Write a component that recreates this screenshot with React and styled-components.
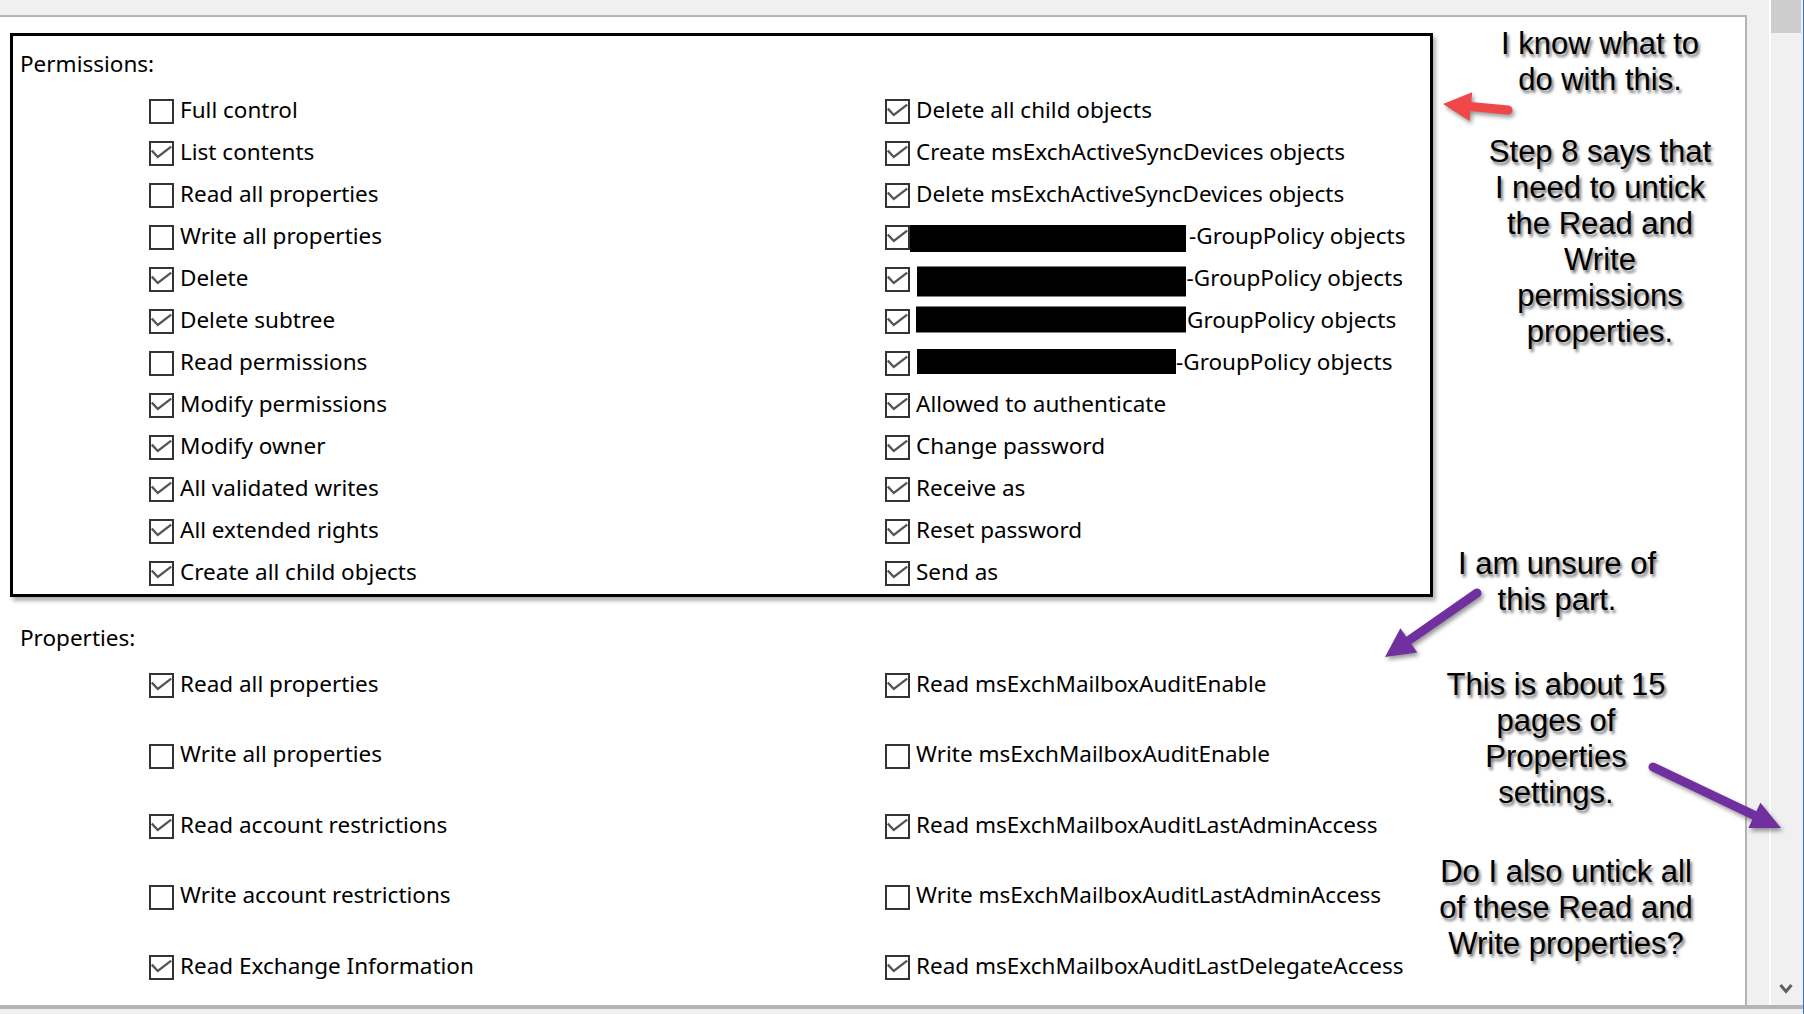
import React from "react";
import styled, { createGlobalStyle } from "styled-components";

const GlobalStyle = createGlobalStyle`
  html, body { margin: 0; padding: 0; background: #f0f0f0; }
  body {
    width: 1804px; height: 1014px; overflow: hidden;
    font-family: "Noto Sans", "Open Sans", sans-serif;
  }
  #root { width: 1804px; height: 1014px; }
`;

const Page = styled.div`
  position: relative;
  width: 1804px;
  height: 1014px;
  box-sizing: border-box;
  border-right: 1px solid #2b79d0;
  background: #f0f0f0;
  display: flex;
  flex-direction: column;
  overflow: hidden;
`;

const Body = styled.div`
  display: flex;
  height: 1005px;
`;

const BottomRule = styled.div`
  height: 4px;
  background: #b4b4b4;
`;

const MainColumn = styled.div`
  width: 1747px;
  display: flex;
  flex-direction: column;
`;

const TopStrip = styled.div`
  height: 15px;
`;

const Panel = styled.div`
  flex: 1;
  min-height: 0;
  background: #fff;
  border-top: 2px solid #b4b4b4;
  border-right: 2px solid #b4b4b4;
  padding: 16px 0 0 10px;
  overflow: hidden;
`;

const Gutter = styled.div`
  width: 22px;
  border-right: 2px solid #fff;
`;

const ScrollBar = styled.div`
  width: 30px;
  display: flex;
  flex-direction: column;
  justify-content: space-between;
  align-items: center;
`;

const Thumb = styled.div`
  width: 30px;
  height: 33px;
  background: #cdcdcd;
`;

const ChevronDown = styled.svg`
  display: block;
  margin-bottom: 11px;
`;

const FrameBox = styled.section`
  width: 1423px;
  height: 564px;
  box-sizing: border-box;
  border: 3px solid #000;
  box-shadow: 3px 4px 4px rgba(0, 0, 0, 0.3);
  padding: 13px 0 0 7px;
`;

const PlainSection = styled.section`
  margin-top: 26px;
  padding-left: 10px;
`;

const SectionLabel = styled.div`
  font-size: 22.5px;
  line-height: 30px;
  color: #000;
`;

const OptionGrid = styled.div`
  display: grid;
  grid-template-columns: 736px auto;
  row-gap: ${(p) => p.$rowGap}px;
  margin-top: 11.5px;
  padding-left: 129px;
`;

const OptionRow = styled.div`
  display: flex;
  align-items: center;
  gap: 6px;
  height: 42px;
`;

const Box = styled.span`
  flex: 0 0 25px;
  width: 25px;
  height: 25px;
  box-sizing: border-box;
  border: 2px solid #333;
  background: #fff;
  display: flex;
  align-items: center;
  justify-content: center;
`;

const OptionText = styled.span`
  display: flex;
  align-items: center;
  font-size: 22.5px;
  line-height: 30px;
  padding-bottom: 4px;
  color: #000;
  white-space: nowrap;
`;

const Redaction = styled.span`
  display: inline-block;
  flex-shrink: 0;
  width: ${(p) => p.$w}px;
  height: ${(p) => p.$h}px;
  margin-left: ${(p) => p.$ml}px;
  margin-right: ${(p) => p.$mr}px;
  transform: translateY(${(p) => p.$dy}px);
  background: #000;
`;

const Note = styled.p`
  position: absolute;
  margin: 0;
  left: ${(p) => p.$cx - 200}px;
  top: ${(p) => p.$top}px;
  width: 400px;
  text-align: center;
  font-family: "Liberation Sans", Arial, sans-serif;
  font-size: 31px;
  line-height: 36px;
  color: #000;
  text-shadow: 2px 3px 3px rgba(0, 0, 0, 0.55);
`;

const Overlay = styled.svg`
  position: absolute;
  left: 0;
  top: 0;
  pointer-events: none;
`;

const ShadowGroup = styled.g`
  filter: drop-shadow(2px 3px 2px rgba(0, 0, 0, 0.4));
`;

function Checkbox({ checked }) {
  return (
    <Box>
      {checked && (
        <svg width="21" height="21" viewBox="0 0 21 21">
          <path d="M0.8 7.6 L6.8 14 L20.2 3.6" fill="none" stroke="#555" strokeWidth="2.3" />
        </svg>
      )}
    </Box>
  );
}

function Option({ checked, children }) {
  return (
    <OptionRow>
      <Checkbox checked={checked} />
      <OptionText>{children}</OptionText>
    </OptionRow>
  );
}

function Hidden({ w, h, ml = 0, mr = 0, dy = 0 }) {
  return <Redaction $w={w} $h={h} $ml={ml} $mr={mr} $dy={dy} />;
}

const permissions = [
  [{ t: "Full control", c: false }, { t: "Delete all child objects", c: true }],
  [{ t: "List contents", c: true }, { t: "Create msExchActiveSyncDevices objects", c: true }],
  [{ t: "Read all properties", c: false }, { t: "Delete msExchActiveSyncDevices objects", c: true }],
  [{ t: "Write all properties", c: false }, { r: { w: 276, h: 27, ml: -6, mr: 3, dy: 3 }, t: "-GroupPolicy objects", c: true }],
  [{ t: "Delete", c: true }, { r: { w: 268.5, h: 30, ml: 1, mr: 1, dy: 3.5 }, t: "-GroupPolicy objects", c: true }],
  [{ t: "Delete subtree", c: true }, { r: { w: 270, h: 26, ml: 0, mr: 1, dy: -0.5 }, t: "GroupPolicy objects", c: true }],
  [{ t: "Read permissions", c: false }, { r: { w: 259, h: 25, ml: 1, mr: 0, dy: 0 }, t: "-GroupPolicy objects", c: true }],
  [{ t: "Modify permissions", c: true }, { t: "Allowed to authenticate", c: true }],
  [{ t: "Modify owner", c: true }, { t: "Change password", c: true }],
  [{ t: "All validated writes", c: true }, { t: "Receive as", c: true }],
  [{ t: "All extended rights", c: true }, { t: "Reset password", c: true }],
  [{ t: "Create all child objects", c: true }, { t: "Send as", c: true }],
];

const properties = [
  [{ t: "Read all properties", c: true }, { t: "Read msExchMailboxAuditEnable", c: true }],
  [{ t: "Write all properties", c: false }, { t: "Write msExchMailboxAuditEnable", c: false }],
  [{ t: "Read account restrictions", c: true }, { t: "Read msExchMailboxAuditLastAdminAccess", c: true }],
  [{ t: "Write account restrictions", c: false }, { t: "Write msExchMailboxAuditLastAdminAccess", c: false }],
  [{ t: "Read Exchange Information", c: true }, { t: "Read msExchMailboxAuditLastDelegateAccess", c: true }],
];

function renderRows(rows) {
  return rows.flatMap((pair, i) =>
    pair.map((item, j) => (
      <Option key={`${i}-${j}`} checked={item.c}>
        {item.r && <Hidden {...item.r} />}
        {item.t}
      </Option>
    ))
  );
}

function Arrow({ tail, tip, headLen, headW, shaft, color }) {
  const dx = tip[0] - tail[0];
  const dy = tip[1] - tail[1];
  const len = Math.hypot(dx, dy);
  const ux = dx / len;
  const uy = dy / len;
  const px = -uy;
  const py = ux;
  const bx = tip[0] - ux * headLen;
  const by = tip[1] - uy * headLen;
  const w1 = [bx + (px * headW) / 2, by + (py * headW) / 2];
  const w2 = [bx - (px * headW) / 2, by - (py * headW) / 2];
  const sx = bx + ux * 3;
  const sy = by + uy * 3;
  return (
    <ShadowGroup>
      <line x1={tail[0]} y1={tail[1]} x2={sx} y2={sy} stroke={color} strokeWidth={shaft} strokeLinecap="round" />
      <polygon points={`${tip[0]},${tip[1]} ${w1[0]},${w1[1]} ${w2[0]},${w2[1]}`} fill={color} />
    </ShadowGroup>
  );
}

export default function App() {
  return (
    <>
      <GlobalStyle />
      <Page>
        <Body>
          <MainColumn>
            <TopStrip />
            <Panel>
              <FrameBox>
                <SectionLabel>Permissions:</SectionLabel>
                <OptionGrid $rowGap={0}>{renderRows(permissions)}</OptionGrid>
              </FrameBox>
              <PlainSection>
                <SectionLabel>Properties:</SectionLabel>
                <OptionGrid $rowGap={28.5}>{renderRows(properties)}</OptionGrid>
              </PlainSection>
            </Panel>
          </MainColumn>
          <Gutter />
          <ScrollBar>
            <Thumb />
            <ChevronDown width="14" height="11" viewBox="0 0 14 11">
              <path d="M1.5 2 L7 8.5 L12.5 2" fill="none" stroke="#606060" strokeWidth="3" />
            </ChevronDown>
          </ScrollBar>
        </Body>
        <BottomRule />

        <Note $cx={1600} $top={26}>
          I know what to
          <br />
          do with this.
          <br />
          <br />
          Step 8 says that
          <br />
          I need to untick
          <br />
          the Read and
          <br />
          Write
          <br />
          permissions
          <br />
          properties.
        </Note>
        <Note $cx={1557} $top={546}>
          I am unsure of
          <br />
          this part.
        </Note>
        <Note $cx={1556} $top={667}>
          This is about 15
          <br />
          pages of
          <br />
          Properties
          <br />
          settings.
        </Note>
        <Note $cx={1566} $top={854}>
          Do I also untick all
          <br />
          of these Read and
          <br />
          Write properties?
        </Note>

        <Overlay width="1804" height="1014" viewBox="0 0 1804 1014">
          <Arrow tail={[1508, 110]} tip={[1443, 104]} headLen={28} headW={29} shaft={9} color="#f04848" />
          <Arrow tail={[1477, 593]} tip={[1385, 657]} headLen={29} headW={29.5} shaft={9} color="#7030a0" />
          <Arrow tail={[1653, 767]} tip={[1781, 828]} headLen={29.5} headW={28} shaft={9} color="#7030a0" />
        </Overlay>
      </Page>
    </>
  );
}
